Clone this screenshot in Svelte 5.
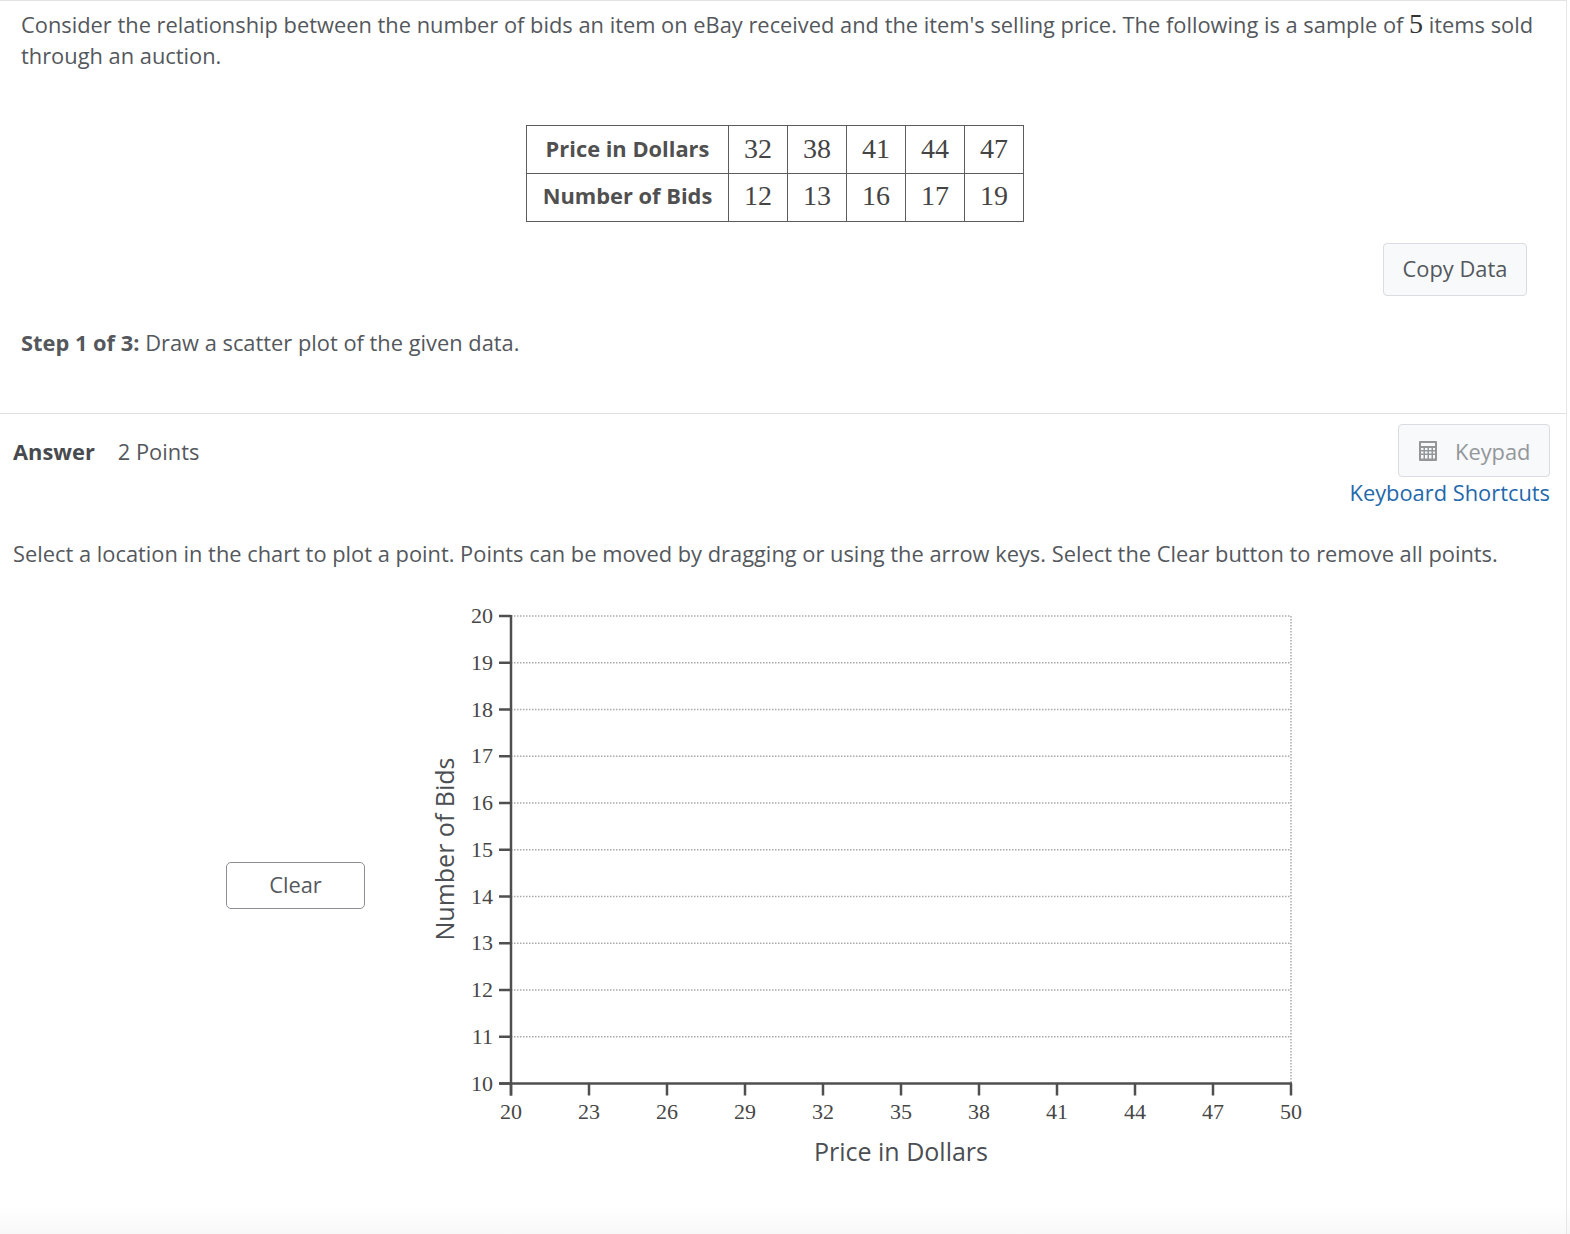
<script>
	const rows = [
		{ label: 'Price in Dollars', values: [32, 38, 41, 44, 47] },
		{ label: 'Number of Bids', values: [12, 13, 16, 17, 19] }
	];

	// chart coords are page pixels minus the svg's origin (420, 592)
	const left = 91;
	const right = 871;
	const top = 23;
	const bottom = 490.5;

	const yTicks = [20, 19, 18, 17, 16, 15, 14, 13, 12, 11, 10];
	const xTicks = [20, 23, 26, 29, 32, 35, 38, 41, 44, 47, 50];

	const yPos = (v) => bottom - ((v - 10) / 10) * (bottom - top);
	const xPos = (v) => left + ((v - 20) / 30) * (right - left);
</script>

<div class="page">
	<main class="card">
		<section class="question">
			<p class="intro">
				Consider the relationship between the number of bids an item on eBay received and the item's
				selling price. The following is a sample of <span class="math big">5</span> items sold through
				an auction.
			</p>

			<div class="table-wrap">
				<table>
					<tbody>
						{#each rows as row}
							<tr>
								<th>{row.label}</th>
								{#each row.values as value}
									<td>{value}</td>
								{/each}
							</tr>
						{/each}
					</tbody>
				</table>
			</div>

			<div class="copy-row">
				<button type="button" class="btn copy">Copy Data</button>
			</div>

			<p class="step"><strong>Step 1 of 3:</strong> Draw a scatter plot of the given data.</p>
		</section>

		<section class="answer">
			<div class="answer-head">
				<div class="answer-title">
					<strong>Answer</strong>
					<span>2 Points</span>
				</div>
				<div class="answer-tools">
					<button type="button" class="btn keypad">
						<svg width="20" height="20" viewBox="0 0 20 20" aria-hidden="true">
							<path
								fill="#94979a"
								fill-rule="evenodd"
								d="M2 0h16a1 1 0 0 1 1 1v18a1 1 0 0 1-1 1H2a1 1 0 0 1-1-1V1a1 1 0 0 1 1-1zM3 2v3h14V2zM3 7v2h2.5V7zm4 0v2h2.5V7zm4 0v2h2.5V7zm4 0v2h2V7zM3 10.5v2h2.5v-2zm4 0v2h2.5v-2zm4 0v2h2.5v-2zm4 0v2h2v-2zM3 14v3.500h2.500V14zm4 0v3.500h2.500V14zm4 0v3.500h2.500V14zm4 0v3.500h2V14z"
							/>
						</svg>
						Keypad
					</button>
					<a class="shortcuts" href="#shortcuts">Keyboard Shortcuts</a>
				</div>
			</div>

			<p class="hint">
				Select a location in the chart to plot a point. Points can be moved by dragging or using the
				arrow keys. Select the Clear button to remove all points.
			</p>

			<div class="chart-row">
				<button type="button" class="btn clear">Clear</button>
				<svg class="chart" width="890" height="584" viewBox="0 0 890 584">
					{#each yTicks as t}
						{#if t !== 10}
							<line class="grid" x1={left} x2={right} y1={yPos(t)} y2={yPos(t)} />
						{/if}
						<line class="axis" x1={left - 12} x2={left} y1={yPos(t)} y2={yPos(t)} />
						<text class="tick" x={left - 18} y={yPos(t) + 7} text-anchor="end">{t}</text>
					{/each}
					<line class="grid" x1={right} x2={right} y1={top} y2={bottom} />
					{#each xTicks as t}
						<line class="axis" x1={xPos(t)} x2={xPos(t)} y1={bottom} y2={bottom + 12} />
						<text class="tick" x={xPos(t)} y={bottom + 35} text-anchor="middle">{t}</text>
					{/each}
					<line class="axis" x1={left} x2={left} y1={top - 1} y2={bottom + 12} />
					<line class="axis" x1={left - 12} x2={right + 1} y1={bottom} y2={bottom} />
					<text class="title" x="481" y="568" text-anchor="middle">Price in Dollars</text>
					<text class="title" transform="translate(34 256) rotate(-90)" text-anchor="middle">Number of Bids</text>
				</svg>
			</div>
		</section>
	</main>
</div>

<style>
	:global(body) {
		background: #f5f5f5;
	}

	.page {
		height: 1234px;
		overflow: hidden;
		font-family: 'Open Sans', 'Noto Sans', sans-serif;
		font-size: 21.85px;
		color: #54585d;
		background: linear-gradient(to bottom, #fff 1205px, #f6f6f6 1234px);
	}

	.card {
		width: 1567px;
		height: 1234px;
		box-sizing: border-box;
		border-top: 1px solid #e2e3e5;
		border-right: 1px solid #e6e7e9;
		background: linear-gradient(to bottom, #fff 1205px, #f8f8f8 1234px);
	}

	p {
		margin: 0;
	}

	.question {
		padding: 8px 21px 0;
		height: 413px;
		box-sizing: border-box;
		border-bottom: 1px solid #dfe1e3;
	}

	.intro {
		line-height: 31px;
	}

	.math {
		font-family: 'Liberation Serif', serif;
		color: #333;
	}

	.big {
		font-size: 28px;
		line-height: 20px;
	}

	.table-wrap {
		display: flex;
		justify-content: center;
		margin-top: 54px;
		margin-left: -16px;
	}

	table {
		border-collapse: collapse;
		color: #444;
	}

	th,
	td {
		box-sizing: border-box;
		border: 1px solid #5c5c5c;
		height: 48px;
		padding: 0;
		text-align: center;
	}

	tr + tr th,
	tr + tr td {
		padding-bottom: 4px;
	}

	th {
		width: 202px;
		padding-bottom: 3px;
		font-weight: 700;
		color: #505050;
	}

	td {
		width: 59px;
		padding-bottom: 2px;
		font-family: 'Liberation Serif', serif;
		font-size: 28px;
	}

	.copy-row {
		display: flex;
		justify-content: flex-end;
		margin-top: 21px;
		padding-right: 18px;
	}

	.btn {
		font: inherit;
		color: inherit;
		background: #f7f9fb;
		border: 1px solid #d9dde1;
		border-radius: 4px;
		cursor: pointer;
		padding: 0 0 2px;
	}

	.copy {
		width: 144px;
		height: 53px;
	}

	.step {
		margin-top: 31px;
		line-height: 31px;
	}

	.answer {
		padding: 0 16px 0 13px;
	}

	.answer-head {
		display: flex;
		justify-content: space-between;
		align-items: flex-start;
		padding-top: 10px;
	}

	.answer-title {
		display: flex;
		align-items: baseline;
		gap: 23px;
		padding-top: 12px;
		line-height: 31px;
	}

	.answer-title strong {
		color: #474a4e;
	}

	.answer-tools {
		display: flex;
		flex-direction: column;
		align-items: flex-end;
	}

	.keypad {
		display: flex;
		align-items: center;
		gap: 17px;
		width: 152px;
		height: 53px;
		padding: 1px 0 0 19px;
		color: #94979a;
	}

	.shortcuts {
		margin-top: 1px;
		line-height: 29px;
		color: #1f69ac;
		text-decoration: none;
	}

	.hint {
		margin-top: 31px;
		line-height: 31px;
	}

	.chart-row {
		display: flex;
		align-items: center;
		margin-top: 24px;
		padding-left: 213px;
	}

	.clear {
		width: 139px;
		height: 47px;
		margin-right: 55px;
		background: #fff;
		border-color: #8b8f93;
		border-radius: 5px;
		color: #55595e;
	}

	.grid {
		stroke: #a9a9a9;
		stroke-width: 1.500;
		stroke-dasharray: 1.500 1.500;
	}

	.axis {
		stroke: #4f4f4f;
		stroke-width: 2.500;
	}

	.tick {
		font-family: 'Liberation Serif', serif;
		font-size: 22px;
		fill: #474747;
	}

	.title {
		font-family: 'Open Sans', 'Noto Sans', sans-serif;
		font-size: 25px;
		fill: #4b4e52;
	}
</style>
